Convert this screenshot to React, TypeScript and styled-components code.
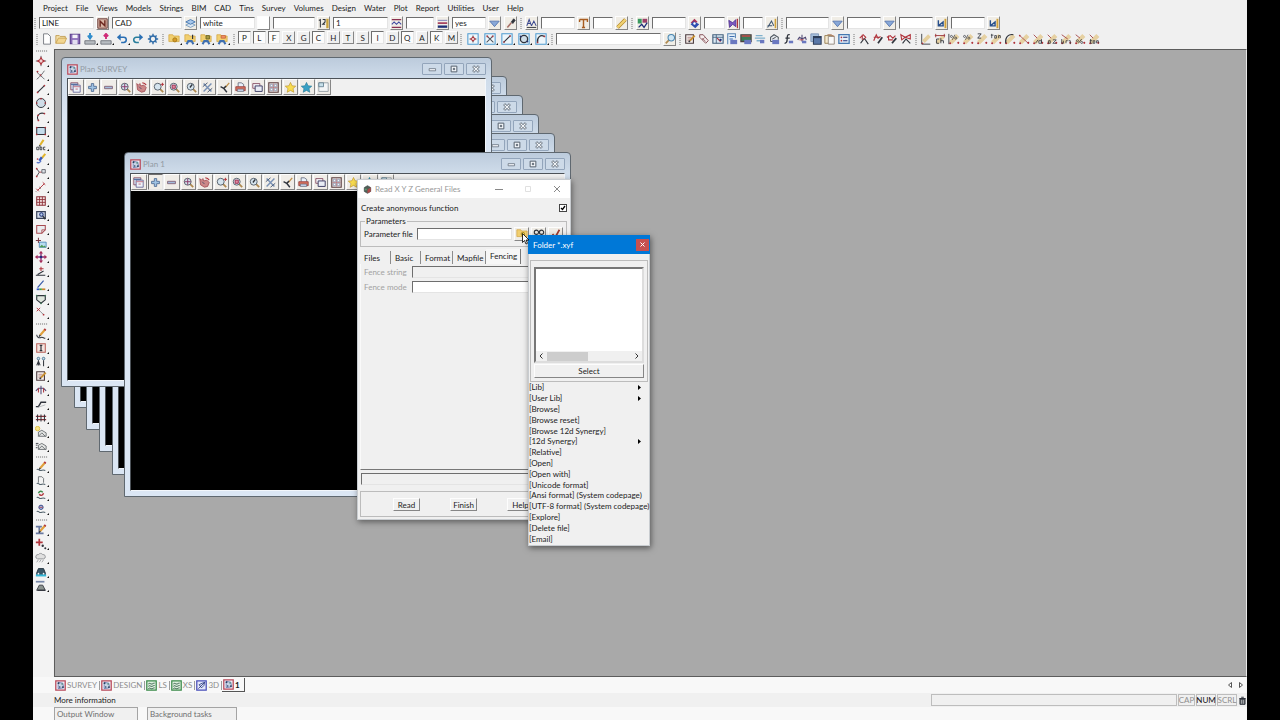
import React from "react";
import styled, { createGlobalStyle, css } from "styled-components";

const GlobalStyle = createGlobalStyle`
  *, *::before, *::after { box-sizing: border-box; }
  body { margin: 0; background: #000; overflow: hidden; }
  body, button, input { font-family: Lato, "Open Sans", sans-serif; font-size: 8px; line-height: 10px; color: #1c1c1c; }
  button, input { margin: 0; padding: 0; border-radius: 0; }
  svg { display: block; flex: none; }
`;

/* ---------- icon drawings, on a 14 unit grid ---------- */

type Stroke = [d: string, stroke?: string, fill?: string, width?: number];

const dot = (x: number, y: number, r: number) =>
  `M${x - r} ${y}a${r} ${r} 0 1 0 ${2 * r} 0a${r} ${r} 0 1 0 ${-2 * r} 0z`;
const box = (x: number, y: number, w: number, h: number) => `M${x} ${y}h${w}v${h}h${-w}z`;

const RED = "#b0343c";
const INK = "#30343c";
const BLUE = "#3f6fb0";
const NAVY = "#1e2f78";
const NONE = "none";

const lens: Stroke[] = [
  ["M8.5 8.5l4.500 4.500", "#b08a50", NONE, 2.2],
  [dot(6, 6, 4.400), "#4a5560", "#d5e4ee", 1.1],
];
const pencil: Stroke[] = [
  ["M11.500 2L6 8.500", "#e0a03c", NONE, 2.4],
  ["M12.300 1.200l-1.200 1.400", RED, NONE, 2.4],
  ["M6.200 8.200L4.800 10", INK, NONE, 1.6],
];
const folder: Stroke[] = [
  ["M1 2h4.500l1 1.500H13V10H1z", "#d0a23c", "#f1cf70", 0.8],
];
const wave: Stroke[] = [["M2 10c2-2 3 2 5 1s3-1 5 0", "#50606a", NONE, 1.2]];
const beige: Stroke[] = [
  ["M3 11.500L11.500 3", "#e6d1a2", NONE, 5],
  [dot(2.500, 12, 1.200), NONE, RED],
  [dot(12, 11.500, 1.200), NONE, RED],
];
const star = "M7 .500l2 4.300 4.700.500-3.500 3.100 1 4.700L7 10.700l-4.200 2.400 1-4.700L.300 5.300 5 4.800z";
const snapBox: Stroke = [box(1, 1, 12, 12), "#4e9bd0", "#eef6fb", 1.2];
const corners: Stroke = [box(5, 8, 8, 5), NONE, "#6a78c0"];

const drawings: Record<string, Stroke[]> = {
  plan: [
    [box(1, 1, 12, 12), "#b8485a", "#eef0f6", 1.600],
    ["M4 3l6 1 1 6-7 1z", "#6472ac", "#c9d5e6", 1],
    [dot(4.500, 4, 1.200) + dot(10, 9, 1.200) + dot(6, 9, 1), NONE, "#28415c"],
    [dot(9, 5, 1), NONE, "#3a8a6a"],
  ],
  section: [
    [box(1, 1, 12, 12), "#3d8b4b", "#dff0df", 1.600],
    ["M3 5c2-2 3 1 5 0s2-1 3-1M3 8c2-2 3 1 5 0s2-1 3-1M3 11c2-2 3 1 5 0s2-1 3-1", "#2c5840", NONE, 1.200],
  ],
  cube: [
    [box(1, 1, 12, 12), "#4a4fb8", "#e3e6fa", 1.600],
    ["M3 11L11 3M4 6l4-2 3-1-1 4-3 3M4 6l3 4", NAVY, NONE, 1],
  ],
  line: [["M3 11L11 3", INK, NONE, 1.300], [dot(3, 11, 1) + dot(11, 3, 1), NONE, RED]],
  point: [["M7 1v12M1 7h12", INK, NONE, 0.8], ["M7 3l1.400 2.600L11 7 8.400 8.400 7 11 5.600 8.400 3 7l2.600-1.400z", RED, "#f6dcdc", 1.200]],
  cross: [["M2 3c3 5 7 6 9 9M11 2C9 5 6 9 2 12", "#5b5f66", NONE, 1], [dot(3, 3, 1) + dot(6.500, 7, 1), NONE, RED]],
  circle: [[dot(7, 7, 5.300), INK, "#cfdde8", 1.100], [dot(2, 7, 1) + dot(12, 7, 1) + dot(7, 2, 1), NONE, RED]],
  arc: [["M11 3C5 1 1 6 4 11", INK, NONE, 1.200], [dot(11, 3, 1) + dot(3.500, 5, 1) + dot(4, 11, 1), NONE, RED]],
  rect: [[box(2, 3, 10, 8), INK, "#c4dcec", 1.200], [dot(2, 3, 1) + dot(12, 3, 1) + dot(2, 11, 1) + dot(12, 11, 1), NONE, RED]],
  label: [["M10 1L6 7", "#e0b42c", NONE, 2.400], ["M6 7l-1 1.500", INK, NONE, 1.400], ["M2 12.500v-3h2.500v3zM6 8.500v4h2v-3H6M12 9.500h-2v3h2", INK, NONE, 1]],
  brush: [["M12 1L8 6", "#e0b42c", NONE, 2.400], ["M8 5L5 9", "#3358c0", NONE, 2.800], ["M2 11c2 1 4 0 5-2", "#5a78c8", NONE, 1.600], [dot(3, 7, 1), NONE, RED]],
  feature: [["M2 2l3 4-3 5", INK, NONE, 1], ["M5 6h3", RED, NONE, 1], [box(8, 3, 4, 4), "#5b5f66", "#dde2e8", 1], [dot(2, 2, 1) + dot(2, 11, 1), NONE, RED]],
  measure: [["M3 11L11 3M1.500 9l3 3M9 1.500l3 3", RED, NONE, 1.100], ["M2 13l-1-1M5 7l2 2", "#7a5a5a", NONE, 1]],
  grid: [[box(2, 2, 10, 10), "#8c3038", "#f0dede", 1.200], ["M2 5.300h10M2 8.600h10M5.300 2v10M8.600 2v10", "#8c3038", NONE, 1]],
  view: [[box(2, 3, 10, 8), "#3a4258", "#d4deec", 1.400], [dot(7.500, 6.500, 2), NAVY, "#b9d0ec", 1.200], ["M9 8l3 4", INK, NONE, 1.600]],
  face: [["M2 3h10v5l-4 4H2z", "#a84a50", "#e9ecef", 1.200], ["M8 12V8h4", "#a84a50", NONE, 1]],
  image: [["M4 1v6M1 4h6", "#7a3a44", NONE, 1.200], [box(5, 6, 8, 6), "#4b86b8", "#b8dcf0", 1], ["M5 12l3-3 2 2 1-1 2 2z", NONE, "#4d9a50"]],
  move: [["M7 1v12M1 7h12", "#8a2c78", NONE, 1.600], ["M7 0l2.500 3h-5zM7 14l2.500-3h-5zM0 7l3-2.500v5zM14 7l-3-2.500v5z", NONE, "#a83058"], [dot(7, 7, 1.500), NONE, NAVY]],
  raise: [["M1 12h11M3 11L10 7", INK, NONE, 1.200], ["M7 2v5M5 4.500h5", RED, NONE, 1.200]],
  colour: [["M3 10L10 2", "#3558a8", NONE, 1.400], ["M2 12h3", "#3355c8", NONE, 2], ["M5 12h3", "#3aa046", NONE, 2], ["M8 12h4", "#c88430", NONE, 2]],
  polygon: [["M2 3h10v5l-5 4-5-4z", INK, "#dfe7dd", 1.300], [dot(2, 3, 1) + dot(12, 3, 1) + dot(7, 12, 1), NONE, "#417a58"]],
  erase: [["M2 1l4 4M6 1L2 5", RED, NONE, 1.100], ["M6 5l4 4", "#7a7f86", NONE, 1], [dot(10, 9, 1), NONE, RED]],
  sketch: [...pencil, ["M2 8c0 3 3 4 5 3s3 1 5 1", INK, NONE, 1.200]],
  beam: [[box(2, 2, 10, 10), "#b86058", "#f3e4df", 1.200], ["M7 4v6M5.500 4h3M5.500 10h3", INK, NONE, 1.400]],
  pins: [[dot(4, 3, 1.500) + dot(10, 3, 1.500), "#3d6c8c", "#cde0ea", 1], ["M4 5v6M10 5v7M2 11l2-5 2 5", INK, NONE, 1.200]],
  note: [[box(2, 2, 9, 10), "#4c3c40", "#f7f1ee", 1.300], ["M4 5h5M4 7h4M4 9h3", "#a06a6a", NONE, 0.8], ["M12.500 3L7 9", "#c89030", NONE, 2.200], ["M7 9l-1.500 1.500", INK, NONE, 1.600]],
  road: [["M1 8l3-3h6l3 3M7 2v10", "#4c4470", NONE, 1.200], ["M4 5v5M10 5v5", RED, NONE, 1.200]],
  slope: [["M1 10h3l3-5h6", INK, NONE, 1.600], ["M3 11l9-3", "#a0a4a8", NONE, 0.8]],
  rails: [["M1 5h12M1 9h12", "#8c3038", NONE, 1.400], ["M3 3v8M7 3v8M11 3v8", INK, NONE, 1.200]],
  sunsite: [[dot(3, 3, 2.600), "#e0bc38", "#f8e58a", 1], ["M4 12V7l4-2 5 3v4zM4 12l4-4 4 4", "#64686c", "#e3e5e4", 1]],
  site: [["M4 11V6l4-2 5 3v4zM4 11l4-4 4 4", "#64686c", "#e3e5e4", 1], ["M1 4h3M1 6h2M1 9h2", INK, NONE, 1]],
  curvepen: [...pencil, ...wave],
  curvedoc: [["M4 9V2h4l2 2v5", "#64686c", "#f3f3f3", 1], ...wave],
  curvesync: [["M4 5c1-3 4-3 5-1", "#3d8b4b", NONE, 1.600], ["M10 5c-1 3-4 3-5 1", RED, NONE, 1.600], ...wave],
  curveball: [[dot(7, 5, 2.500), NAVY, "#a9c6ea", 1], ["M5 5h4", RED, NONE, 1], ...wave],
  girder: [["M1 3h7M1 11h9M5 3v8", "#6878a0", NONE, 2], ...pencil],
  nodes: [["M5 1v8M1 5h8", RED, NONE, 2], [dot(9, 9, 1.400) + dot(12, 12, 1.200), NONE, INK]],
  cloud: [["M3 8a2.500 2.500 0 0 1 1-5 3 3 0 0 1 5 0 2.500 2.500 0 0 1 1 5z", "#8c8f92", "#e0e0e0", 1], ["M4 9l-2 3M7 9l-2 3M10 9l-2 3", "#9a9da0", NONE, 1]],
  car: [["M2 8l2-5h6l2 5v3H2z", "#1e2c38", "#3a5666", 1], ["M1 11h12", "#35b8d8", NONE, 2.400], [dot(4, 9, 1) + dot(10, 9, 1), NONE, "#f0f6f8"]],
  tunnel: [["M1 2h10", "#7888a8", NONE, 2], ["M2 12l3-6h4l3 6z", INK, "#8c9490", 1], ["M3 12h9", INK, NONE, 1.400]],

  file: [["M3 1h5l3 3v9H3z", "#6d7278", "#fff", 1]],
  open: [["M1 12V3h4l1 1h6v3", "#c09a50", "#f3dfa8", 1], ["M1 12l3-6h9.500L11 12z", "#c8a050", "#f2d690", 1]],
  save: [[box(1.500, 1.500, 11, 11), "#5b3f8c", "#8a6cb8", 1.300], [box(4, 2, 6, 4), NONE, "#f4f2f8"], [box(4, 8, 6, 5), NONE, "#e3dff0"]],
  download: [["M7 0v5M4.500 3L7 6.500 9.500 3", "#2f8ccc", NONE, 2.200], ["M1 9h12v4H1z", "#6d7278", "#b8bdc2", 1]],
  upload: [["M7 7V2M4.500 4L7 1l2.500 3", "#d02c78", NONE, 2.200], ["M1 9h12v4H1z", "#6d7278", "#b8bdc2", 1]],
  undo: [["M3 5h6a3 3 0 0 1 0 6H6", "#2a6fb4", NONE, 1.800], ["M5.500 1L1 5l4.500 4z", NONE, "#2a6fb4"]],
  redo: [["M11 5H5a3 3 0 0 0 0 6h3", "#2a7f9c", NONE, 1.800], ["M8.500 1L13 5 8.500 9z", NONE, "#2a6fb4"]],
  gear: [["M7 1v12M1 7h12M2.800 2.800l8.400 8.400M11.200 2.800l-8.400 8.400", "#2f6ca8", NONE, 1.600], [dot(7, 7, 3.400), "#2f6ca8", "#f0f0f0", 1.800]],
  folderbox: [...folder, [dot(8, 8, 2.400), "#a07818", "#d89a28", 1]],
  foldergear: [...folder, ["M3 13l2-3.500h4l2 3.500", BLUE, NONE, 2.400], ["M10 2v5", INK, NONE, 1.400]],
  foldergrid: [...folder, ["M3 13l2-3.500h4l2 3.500", BLUE, NONE, 2.400], [box(7, 3, 4, 4), "#6a6420", "#a89a40", 1]],
  folderred: [...folder, ["M3 13l2-3.500h4l2 3.500", BLUE, NONE, 2.400], [box(6, 3, 5, 3), "#c86838", "#f09068", 1]],
  snappoint: [snapBox, ["M7 3v8M3 7h8", INK, NONE, 1], ["M7 4.500l2.500 2.500L7 9.500 4.500 7z", RED, "#f3d6d6", 1.200]],
  snapcross: [snapBox, ["M3 3l8 8M11 3l-8 8", "#50545c", NONE, 1.200], [dot(4, 4, 1) + dot(10, 4, 1), NONE, RED]],
  snapline: [snapBox, ["M3 11L11 3", INK, NONE, 1.400], [dot(3.500, 10.500, 1) + dot(10.500, 3.500, 1), NONE, RED]],
  snapcircle: [snapBox, [dot(7, 7, 4.200), INK, "#cfdde8", 1.500], [dot(3, 4, 1) + dot(11, 10, 1), NONE, NAVY]],
  snaparc: [snapBox, ["M11 4C6 1 2 6 3 11", INK, NONE, 1.500], [dot(11, 4, 1) + dot(3, 11, 1), NONE, RED]],
  search: [["M6 8l-4 4", "#b08a50", NONE, 2], [dot(8.500, 5.500, 3.800), "#4a86b0", "#cfe6f4", 1.200]],

  tag: [["M2 2l4 0 6 7-3 3-7-7z", "#7a4048", "#f6eeee", 1], ["M5 6l4 4M8 5l-3 3", "#7a4048", NONE, 0.8]],
  table: [[box(1, 2, 12, 10), "#44607c", "#dbe9f4", 1.300], ["M1 5h12M5 2v10", "#44607c", NONE, 1], ["M6 6l4 4", RED, NONE, 1.400], [dot(10, 8, 1.400), NONE, NAVY]],
  layers2: [["M2 13V1h9v5", "#5c87b4", "#e4eff8", 1.200], ["M4 4h6M4 7h4", BLUE, NONE, 1.200], corners],
  board: [[box(1, 2, 12, 8), "#4c4040", "#3d7a58", 1.300], ["M2 3.500h10", "#c04848", NONE, 1.800], corners],
  stack: [["M2 3h8M1 6h12M3 9h6", "#7fb0cc", NONE, 1.600], [box(7, 8, 5, 4), NONE, "#6a78c0"]],
  shapes: [["M3 10V5l4-3 5 3v3M3 10h4", "#505860", "#e6eaee", 1.200], ["M5 7l4-2", INK, NONE, 1], corners],
  fx: [["M9 2C6 1 6 5 6 8s-1 4-3 4M4 6h5", INK, NONE, 1.500], [box(8, 9, 5, 3), NONE, "#6a78c0"]],
  balance: [["M2 8l2-3 3 2 4-2 1 3M7 2v8", "#4c4470", NONE, 1.200], ["M4 8h5", RED, NONE, 1], [box(7, 9, 5, 3), NONE, "#6a78c0"]],
  panel: [[box(1, 1, 9, 9), "#7890b4", "#a8c0dc", 1], [box(4, 4, 9, 9), "#2c3c58", "#5a78a8", 1.200], ["M4 5h9", "#2c3c58", NONE, 2]],
  clip: [[box(1, 3, 8, 9), "#927848", "#f4ead0", 1], [box(5, 4, 7, 9), "#8b7f75", "#f8f8f8", 1], ["M4 2h5M8 2l4 2", "#b08060", NONE, 1.200]],
  list: [[box(1, 2, 12, 10), "#4478b0", "#e6f0fa", 1.500], ["M6 5h5M6 9h5", NAVY, NONE, 1.200], [dot(4, 5, 1) + dot(4, 9, 1), NONE, RED]],
  comp1: [["M2 6l4-4 3 3-3 3M5 2v6", RED, NONE, 1.300], ["M3 12l3-4M6 7h2l4 6", INK, NONE, 1.300]],
  comp2: [["M2 9l3-7 2 4 3-2M2 5h7", RED, NONE, 1.300], ["M12 5l-5 7", INK, NONE, 2]],
  comp3: [["M1 5l4-2 3 3 3-3M3 3v5h5", RED, NONE, 1.300], ["M12 6l-5 6", INK, NONE, 2]],
  comp4: [["M1 2l5 3 6-3v5L6 5 2 8z", RED, NONE, 1.300], ["M3 12l4-5 5 5", INK, NONE, 1.300]],
  rulebase: [["M2 1v12h10", INK, NONE, 1], ["M4 10l7-7", "#e5cf9d", NONE, 4.400], [dot(3, 12, 1), NONE, RED]],
  rulech: [["M3 12L11 4", "#e6d1a2", NONE, 4.400], ["M1 3h12M2 1v4M12 1v4", "#a03c40", NONE, 1.100], ["M6 7H3v5h3M8 6v6M8 9h3v3", INK, NONE, 1]],
  rulepct: [...beige, ["M1 1v12", INK, NONE, 1], [dot(4, 4, 1.200) + dot(9, 6, 1.200), INK, NONE, 0.8], ["M8 2L5 8", INK, NONE, 0.8]],
  rulepct2: [...beige, [dot(3, 4, 1.200) + dot(8, 6, 1.200), INK, NONE, 0.8], ["M7 2L4 8", INK, NONE, 0.8]],
  rulez: [...beige, ["M2 1h4L2 6h4", INK, NONE, 1]],
  ruletan: [...beige, ["M2 1v5M1 2.500h3M5.500 3h2v3h-2zM10 6V3h2v3", INK, NONE, 0.9]],
  rulearc: [...beige, ["M2 12C1 5 5 1 11 2", INK, NONE, 1.200]],
  rulecross: [...beige, ["M2 3l10 9", "#a03c40", NONE, 0.9], [dot(2, 3, 1), NONE, RED]],
  rulexd: [...beige, ["M2 2l4 4", "#a03c40", NONE, 1], ["M4 12l3-4M8 9h3v3H8zM11 7v5", INK, NONE, 0.9]],
  ruledz: [...beige, ["M2 2l4 4", "#a03c40", NONE, 1], ["M3 9h2v3H3zM8 8h4l-4 4h4", INK, NONE, 0.9]],
  rulebrg: [...beige, ["M2 7v5h2V9M7 12V9h2M10 9h2v4", INK, NONE, 0.9], ["M2 2l7 5", "#a03c40", NONE, 1]],
  rulepct3: [...beige, ["M2 2l5 4", "#a03c40", NONE, 1], ["M9 7l-4 5", INK, NONE, 0.9], [dot(4, 9, 1.200) + dot(9, 11, 1.200), INK, NONE, 0.8]],
  ruletan2: [...beige, ["M2 2l4 4", "#a03c40", NONE, 1], ["M3 7v5h2M2 9h3M6 9h2v3H6zM10 12V9h2v3", INK, NONE, 0.9]],

  windows: [[box(1, 1, 9, 9), "#7c3c54", "#dbe6f2", 1], ["M1 3h9", "#5878a8", NONE, 1.600], [box(4, 4, 9, 9), "#5b5a90", "#eef3f9", 1], ["M4 6h9M7 9h3", "#c07080", NONE, 1.200]],
  plus: [["M5.500 2h3v3.500H12v3H8.500V12h-3V8.500H2v-3h3.500z", "#46628c", "#9fc3e4", 1]],
  minus: [["M2 5.500h10v3H2z", "#7a5468", "#a4bcdc", 1]],
  zoomfit: [...lens, ["M6 2v8M2 6h8", "#8a3868", NONE, 1.200]],
  pan: [["M1 2l2 2 2-2 1 3 4-1 3 3-2 5-4 1-5-3z", "#a04850", "#cc8888", 1], ["M8 1l3 1 2 2", RED, NONE, 1.400], ["M4 6l3 3", "#54506c", NONE, 1.200]],
  zoominout: [...lens, ["M10 3h4M12 1v4", RED, NONE, 1.200]],
  zoomwin: [...lens, [box(4, 4, 4, 4), "#a02c50", "#e090a0", 1.200]],
  zoomprev: [...lens, ["M8 3L5 7", INK, NONE, 1.800]],
  redraw: [["M2 2l10 10M12 2L2 12", "#7890b4", NONE, 1.800], ["M1 6l6-5M7 13l6-5", "#4a5a74", NONE, 1.200]],
  sweep: [["M13 1L8 7", "#c09048", NONE, 1.600], ["M9 5L6 8 2 6M6 8l4 5", INK, NONE, 1.800]],
  printer: [["M4 6V1h4l3 2v3", "#5a6070", "#e8f0fa", 1], ["M1 6h12v5H1z", "#903838", "#d8705c", 1], [box(3, 9, 8, 3), "#5a6070", "#c8d4ec", 0.8]],
  copies: [[box(1, 2, 9, 6), "#7c3c54", "#f3f3f6", 1], [box(4, 5, 9, 7), "#3c3c64", "#e9edf5", 1.200]],
  matrix: [[box(1, 1, 12, 12), "#5c4040", "#e7dfe0", 1.400], [box(3, 3, 3, 3) + box(8, 3, 3, 3) + box(3, 8, 3, 3) + box(8, 8, 3, 3), "#8090a8", "#f6f6f8", 0.900], ["M7 2v10M2 7h10", "#b07078", NONE, 0.800]],
  gold: [[star, "#b8902c", "#f8dc50", 0.8]],
  teal: [[star, "#287894", "#38a0c4", 0.8]],
  layout: [[box(1, 1, 12, 11), "#8a949c", "#f3f5f6", 1], [box(1, 1, 6, 5), "#5a7888", "#c8e0ea", 1]],

  hatchN: [[box(1, 1, 12, 12), "#6a3c38", "#d8b4a4", 1.200], ["M4 11V4l6 6V3", "#6c2820", NONE, 1.800]],
  layer: [["M1 9l6-3 6 3-6 3z", "#6890b8", "#dce8f4", 1], ["M1 5l6-3 6 3-6 3z", "#4878b0", "#a8c8ec", 1.200]],
  scale: [["M1 3l2-1v10M6 2h3v3L6 8h3", INK, NONE, 1.300], ["M12 1v12", "#c8a038", NONE, 3]],
  linestyle: [["M1 2h12M1 12h12", "#8a3050", NONE, 1.600], ["M1 8l3-3 3 3 3-3 3 3", "#4048a0", NONE, 1.400]],
  weight: [["M1 3h12", "#7c7cb8", NONE, 1.200], ["M1 6.500h12", "#a03050", NONE, 2], ["M1 11h12", NAVY, NONE, 3]],
  down: [["M1 4h12L7 11z", "#4c6ca8", "#88a8d8", 1]],
  picker: [["M11 1L8 5l2 2 3-4z", INK, INK, 1], ["M8 6l-5 6", "#a87068", NONE, 2]],
  textstyle: [["M1 10l3-8 3 8M2 7h4M7 10l3-6 3 6", "#3a4890", NONE, 1.300], ["M1 12h12", INK, NONE, 1.200]],
  bigT: [["M2 2h10v3M2 2v3M7 2v10M5 12h4", "#a85c20", NONE, 1.800]],
  ruler: [["M2 12L12 2", "#ac8020", NONE, 4.600], ["M2 12L12 2", "#f0d070", NONE, 3]],
  palette: [[box(1, 1, 5, 6), NONE, "#3a9a60"], [box(7, 1, 6, 5), NONE, "#9a4068"], ["M2 12l4-4 3 4 4-6", NAVY, NONE, 1.600]],
  swap: [["M2 6l5-5 4 4-4 2z", NONE, "#a83058"], ["M2 8l4-4 7 4-5 5z", NONE, "#2c4cb0"], [dot(7, 7, 1.500), NONE, "#fff"]],
  swap2: [["M1 3l5 3 4-4v9l-4-3-4 4z", "#4a2c90", "#7c58c0", 1], ["M12 1v12", RED, NONE, 1.600]],
  angle: [["M2 12l5-8 3 6M2 10h6", "#3c5470", NONE, 1.300], ["M12 1v12", "#d0a038", NONE, 2]],
  angle2: [["M3 3v7h7M3 10l6-5v5", "#28508c", NONE, 1.800], ["M12 1v12", "#d0a038", NONE, 2.400]],
  link: [[dot(4, 5, 2.500) + dot(10, 5, 2.500), INK, NONE, 1.300]],
  tick: [["M3 7l3 4 5-9", "#a03c30", NONE, 2]],
  pick: [...folder, [dot(8, 7, 2), "#a08018", "#f8e060", 1]],
  app: [["M2 4l5-3 5 3v6l-5 3-5-3z", "#3c4444", "#506058", 1], ["M7 7l5-3v6l-5 3z", NONE, "#b04848"], [dot(4.500, 7, 1.500), NONE, "#58a070"]],
  trash: [["M2 4h10M5 2h4", INK, NONE, 1.800], ["M3 5h8v8H3z", INK, "#60646a", 1.400], ["M5.500 6v6M8.500 6v6", "#e8e8e8", NONE, 0.8]],
  min: [["M3 6.500h9v3H3z", "#66717e", "#f4f7fa", 1.100]],
  max: [[box(3, 3, 8, 8), "#56616e", "#f4f7fa", 1.400], [box(6, 6, 2, 2), "#56616e", "#56616e", 1]],
  close: [["M3 3l8 8M11 3l-8 8", "#56616e", NONE, 3.800], ["M3.500 3.500l7 7M10.500 3.500l-7 7", "#f4f7fa", NONE, 1.600]],
};

const Drawing = ({ name, size = 12 }: { name: string; size?: number }) => (
  <svg width={size} height={size} viewBox="0 0 14 14" aria-hidden="true">
    {drawings[name].map(([d, stroke = NONE, fill = NONE, width = 1], i) => (
      <path key={i} d={d} stroke={stroke} fill={fill} strokeWidth={width} />
    ))}
  </svg>
);

/* ---------- shared looks ---------- */

const sunken = css`
  border: 1px solid;
  border-color: #6e6e6e #e4e4e4 #e4e4e4 #6e6e6e;
`;
const raised = css`
  border: 1px solid;
  border-color: #fdfdfd #868686 #868686 #fdfdfd;
`;

/* ---------- shell ---------- */

const Screen = styled.div`
  height: 100vh;
  padding: 0 33px;
  background: #000;
`;
const Shell = styled.div`
  height: 100%;
  display: flex;
  flex-direction: column;
  overflow: hidden;
  background: #f0f0f0;
`;
const MenuBar = styled.nav`
  display: flex;
  height: 15px;
  padding-left: 6px;
  flex: none;
`;
const MenuButton = styled.button`
  border: 0;
  background: none;
  padding: 0 4px;
  white-space: nowrap;
`;
const ToolRow = styled.div<{ $gap: number }>`
  display: flex;
  flex: none;
  align-items: center;
  height: 16px;
  gap: ${(p) => p.$gap}px;
  padding-left: 1px;
`;
const Grip = styled.span<{ $flat?: boolean; $side?: number }>`
  flex: none;
  width: ${(p) => (p.$flat ? 12 : 2)}px;
  height: ${(p) => (p.$flat ? 2 : 11)}px;
  margin: ${(p) => (p.$flat ? "3px 0 2px 3px" : `0 ${p.$side ?? 0}px`)};
  background: repeating-linear-gradient(${(p) => (p.$flat ? "90deg" : "180deg")}, #b4b4b4 0 1px, #ececec 1px 2px);
`;
const Pair = styled.span<{ $side?: number }>`
  display: flex;
  align-items: center;
  gap: 2px;
  padding: 0 ${(p) => p.$side ?? 0}px;
`;
const TextBox = styled.input<{ $w?: number }>`
  ${sunken}
  width: ${(p) => (p.$w ? `${p.$w}px` : "auto")};
  flex: ${(p) => (p.$w ? "none" : "1")};
  min-width: 0;
  height: 12px;
  padding: 0 2px;
  background: #fff;
  &:disabled { background: #f0f0f0; }
`;
const ToolButton = styled.button<{ $white?: boolean; $w?: number }>`
  ${raised}
  display: flex;
  align-items: center;
  justify-content: center;
  flex: none;
  width: ${(p) => p.$w ?? 13}px;
  height: 14px;
  background: ${(p) => (p.$white ? "#fff" : "#f0ede6")};
`;
const IconCell = styled.button<{ $w?: number; $corner?: boolean }>`
  position: relative;
  display: flex;
  align-items: center;
  justify-content: center;
  flex: none;
  width: ${(p) => p.$w ?? 14}px;
  height: 14px;
  border: 0;
  background: none;
  &::after {
    content: ${(p) => (p.$corner ? '""' : "none")};
    position: absolute;
    right: 0;
    bottom: 1px;
    border: 1px solid #111;
    border-color: transparent #111 #111 transparent;
  }
`;
const LetterStrip = styled.div`
  display: flex;
  flex: none;
  width: 220px;
  height: 16px;
  gap: 2px;
`;
const LetterButton = styled.button<{ $on: boolean }>`
  ${(p) => (p.$on ? sunken : raised)}
  flex: 1;
  height: 13px;
  background: ${(p) => (p.$on ? "#fbfbfb" : "#efefef")};
`;

const Middle = styled.div`
  display: flex;
  flex: 1;
  min-height: 0;
`;
const SideBar = styled.div`
  display: flex;
  flex-direction: column;
  flex: none;
  width: 20px;
  background: #f3f3f3;
`;
const Desktop = styled.main`
  position: relative;
  flex: 1;
  margin: 2px 0 0 1px;
  border: 1px solid #5c5c5c;
  border-right-color: #e8e8e8;
  background: #a9a9a9;
  overflow: hidden;
`;

/* ---------- document windows ---------- */

const Frame = styled.section<{ $x: number; $y: number; $w: number; $h: number }>`
  position: absolute;
  left: ${(p) => p.$x}px;
  top: ${(p) => p.$y}px;
  width: ${(p) => p.$w}px;
  height: ${(p) => p.$h}px;
  display: flex;
  flex-direction: column;
  padding: 0 5px 5px;
  border: 1px solid #5f6870;
  border-radius: 4px 4px 0 0;
  background: linear-gradient(#bccbdc, #cfdcea 20px, #dbe6f4 60px);
`;
const FrameTitle = styled.header`
  display: flex;
  align-items: center;
  flex: none;
  height: 20px;
  padding-top: 2px;
  gap: 2px;
  color: #929aa3;
  h2 { flex: 1; margin: 0; font: inherit; }
`;
const FrameButton = styled.button`
  display: flex;
  align-items: center;
  justify-content: center;
  width: 20px;
  height: 12px;
  border: 1px solid #93a5bb;
  border-radius: 1px;
  background: #cddae8;
`;
const FrameBody = styled.div`
  display: flex;
  flex-direction: column;
  flex: 1;
  border: 1px solid #4c5258;
  border-right-color: #f2f6fb;
  border-bottom-color: #f2f6fb;
  background: #000;
`;
const FrameTools = styled.div`
  flex: none;
  height: 17px;
  background: #f0f0f0;
`;
const FrameStrip = styled.div`
  display: flex;
  width: 263px;
  gap: 1px;
`;
const FrameTool = styled.button<{ $on?: boolean }>`
  ${(p) => (p.$on ? sunken : raised)}
  flex: 1;
  display: flex;
  align-items: center;
  justify-content: center;
  height: 16px;
  background: #f0ede8;
`;

/* ---------- dialog ---------- */

const Dialog = styled.section`
  position: absolute;
  left: 302px;
  top: 129px;
  width: 214px;
  height: 341px;
  display: flex;
  flex-direction: column;
  background: #f0f0f0;
  border: 1px solid #c8ccd0;
  box-shadow: 1px 2px 6px rgba(0, 0, 0, 0.45);
`;
const DialogTitle = styled.header`
  display: flex;
  align-items: center;
  flex: none;
  height: 18px;
  padding-left: 5px;
  gap: 3px;
  background: #fff;
  color: #999;
  h2 { flex: 1; margin: 0; font: inherit; }
`;
const CaptionButton = styled.button<{ $dim?: boolean }>`
  display: flex;
  justify-content: center;
  width: 26px;
  border: 0;
  background: none;
  opacity: ${(p) => (p.$dim ? 0.25 : 1)};
`;
const DialogBody = styled.div`
  display: flex;
  flex-direction: column;
  flex: 1;
  padding: 5px 3px 2px 2px;
`;
const CheckLine = styled.label`
  display: flex;
  justify-content: space-between;
  align-items: center;
  height: 10px;
  padding-left: 1px;
`;
const Tick = styled.input`
  appearance: none;
  width: 8px;
  height: 8px;
  border: 1px solid #444;
  background: #fff;
  &:checked {
    background: #fff url("data:image/svg+xml,%3Csvg xmlns='http://www.w3.org/2000/svg' viewBox='0 0 6 6'%3E%3Cpath d='M1 3l1.500 1.500L5 1' fill='none' stroke='%23000' stroke-width='1.300'/%3E%3C/svg%3E");
  }
`;
const Group = styled.fieldset`
  flex: none;
  min-width: 0;
  height: 31px;
  margin: 3px 0 0;
  padding: 0 3px;
  border: 1px solid #bcbcbc;
  legend { padding: 0 1px; margin-left: 1px; height: 10px; }
`;
const FieldLine = styled.div<{ $label: number }>`
  display: flex;
  align-items: center;
  gap: 2px;
  height: 15px;
  label { flex: none; width: ${(p) => p.$label}px; white-space: nowrap; }
`;
const TabStrip = styled.div`
  display: flex;
  align-items: flex-end;
  flex: none;
  height: 17px;
`;
const TabButton = styled.button<{ $w: number; $on?: boolean }>`
  width: ${(p) => p.$w}px;
  height: ${(p) => (p.$on ? 15 : 13)}px;
  padding: 0 0 ${(p) => (p.$on ? 2 : 0)}px 4px;
  text-align: left;
  border: 0;
  border-right: 1px solid ${(p) => (p.$on ? "#777" : "#8c8c8c")};
  background: ${(p) => (p.$on ? "#f6f6f6" : "none")};
`;
const TabPanel = styled.div`
  flex: 1;
  padding: 0 0 0 3px;
  border-left: 1px solid #fafafa;
  border-bottom: 1px solid #777;
  color: #a2a2a2;
`;
const Output = styled.output`
  ${sunken}
  flex: none;
  height: 12px;
  margin: 3px 0 6px 1px;
`;
const Actions = styled.div`
  display: flex;
  align-items: center;
  flex: none;
  height: 26px;
  padding: 1px 0 0 32px;
  gap: 30px;
  border: 1px solid #bcbcbc;
`;
const PushButton = styled.button`
  ${raised}
  width: 27px;
  height: 13px;
  background: #f0f0f0;
`;

/* ---------- file popup ---------- */

const Popup = styled.section`
  position: absolute;
  left: 473px;
  top: 185px;
  width: 122px;
  height: 311px;
  display: flex;
  flex-direction: column;
  background: #f0f0f0;
  border: 1px solid #c8ccd0;
  border-top: 0;
  box-shadow: 1px 2px 6px rgba(0, 0, 0, 0.5);
`;
const PopupTitle = styled.header`
  display: flex;
  align-items: center;
  justify-content: space-between;
  flex: none;
  height: 19px;
  margin: 0 -1px;
  padding: 0 1px 0 5px;
  background: #0078d7;
  color: #fff;
  h2 { margin: 0; font: inherit; }
`;
const PopupClose = styled.button`
  display: flex;
  align-items: center;
  justify-content: center;
  width: 13px;
  height: 12px;
  border: 0;
  background: #c75050;
`;
const PopupBox = styled.div`
  display: flex;
  flex-direction: column;
  flex: none;
  height: 122px;
  margin: 6px 1px 0;
  padding: 6px 3px 3px;
  border: 1px solid #bcbcbc;
  gap: 1px;
`;
const FileList = styled.div`
  display: flex;
  flex-direction: column;
  justify-content: flex-end;
  flex: 1;
  border: 2px solid;
  border-color: #777 #ddd #ddd #777;
  background: #fff;
`;
const ScrollBar = styled.div`
  display: flex;
  align-items: center;
  height: 10px;
  padding: 0 2px;
  background: #f0f0f0;
`;
const ScrollTrack = styled.div`
  flex: 1;
  height: 9px;
  padding: 0 3px;
  &::before { content: ""; display: block; width: 41px; height: 9px; background: #cdcdcd; }
`;
const SelectButton = styled.button`
  ${raised}
  height: 14px;
  background: #f0f0f0;
`;
const Choices = styled.div`
  display: flex;
  flex-direction: column;
  flex: 1;
  padding-bottom: 1px;
`;
const Choice = styled.button`
  display: flex;
  align-items: center;
  justify-content: space-between;
  flex: 1;
  min-height: 0;
  padding: 0 8px 0 0;
  border: 0;
  background: none;
  white-space: nowrap;
`;
const Pointer = styled.svg`
  position: absolute;
  left: 467px;
  top: 183px;
`;

/* ---------- footer ---------- */

const ViewTabs = styled.div`
  display: flex;
  align-items: center;
  flex: none;
  height: 16px;
  padding: 0 1px 0 21px;
  background: #f8f8f8;
`;
const ViewTab = styled.button<{ $on?: boolean }>`
  display: flex;
  align-items: center;
  gap: 1px;
  height: 14px;
  padding: 0 2px 0 1px;
  border: 0;
  background: none;
  color: #8d8d8d;
  ${(p) =>
    p.$on &&
    css`
      padding-right: 4px;
      border-right: 1px solid #555;
      border-bottom: 1px solid #555;
      color: #111;
      font-weight: 700;
    `}
`;
const Bar = styled.span`
  width: 1px;
  height: 9px;
  background: #9c9c9c;
`;
const Spacer = styled.span`
  flex: 1;
`;
const Arrow = styled.button`
  display: flex;
  justify-content: center;
  width: 11px;
  border: 0;
  background: none;
`;
const StatusBar = styled.footer`
  display: flex;
  align-items: center;
  flex: none;
  height: 14px;
  gap: 1px;
  padding-left: 21px;
  span:first-child { flex: 1; }
`;
const StatusCell = styled.span<{ $w: number; $on?: boolean }>`
  display: flex;
  align-items: center;
  justify-content: center;
  width: ${(p) => p.$w}px;
  height: 12px;
  border: 1px solid #bdbdbd;
  color: ${(p) => (p.$on ? "#111" : "#8f8f8f")};
`;
const Docked = styled.div`
  display: flex;
  flex: none;
  height: 13px;
  gap: 9px;
  padding-left: 21px;
  background: #f8f8f8;
`;
const DockTab = styled.button<{ $w: number }>`
  width: ${(p) => p.$w}px;
  padding-left: 2px;
  text-align: left;
  border: 1px solid #a4a4a4;
  border-bottom: 0;
  background: #f0f0f0;
  color: #6f6f6f;
`;

/* ---------- data ---------- */

const menus = ["Project", "File", "Views", "Models", "Strings", "BIM", "CAD", "Tins", "Survey", "Volumes", "Design", "Water", "Plot", "Report", "Utilities", "User", "Help"];

type Field = { w?: number; value?: string; icon?: string; name?: string };
const fieldGroups: Field[][] = [
  [
    { w: 55, value: "LINE", icon: "hatchN", name: "Name" },
    { w: 70, value: "CAD", icon: "layer", name: "Model" },
    { w: 55, value: "white", icon: "", name: "Colour" },
    { w: 42, icon: "scale", name: "Height" },
    { w: 55, value: "1", icon: "linestyle", name: "Linestyle" },
    { w: 28, icon: "weight", name: "Weight" },
    { w: 34, value: "yes", icon: "down", name: "Tinable" },
    { icon: "picker", name: "Pick" },
  ],
  [
    { icon: "textstyle", name: "Text style" },
    { w: 34, icon: "bigT", name: "Text" },
    { w: 20, icon: "ruler", name: "Size" },
  ],
  [
    { icon: "palette", name: "Palette" },
    { w: 34, icon: "swap", name: "Symbol" },
    { w: 21, icon: "swap2", name: "Symbol size" },
    { w: 20, icon: "angle", name: "Symbol angle" },
  ],
  [
    { w: 43, icon: "down", name: "Style" },
    { w: 34, icon: "down", name: "Justify" },
    { w: 34, icon: "angle2", name: "Angle" },
    { w: 34, icon: "angle2", name: "Slant" },
  ],
];

const letters = "PLFXGCHTSIDQAKM".split("");
const lettersOn = "PLFCIQK";
const snaps = ["snappoint", "snapcross", "snapline", "snapcircle", "snaparc"];
const edits = ["note", "tag", "table", "layers2", "board", "stack", "shapes", "fx", "balance", "panel", "clip", "list"];
const comps = ["comp1", "comp2", "comp3", "comp4"];
const rules = ["rulebase", "rulech", "rulepct", "rulepct2", "rulez", "ruletan", "rulearc", "rulecross", "rulexd", "ruledz", "rulebrg", "rulepct3", "ruletan2"];
const sideGroups = [
  ["point", "cross", "line", "circle", "arc", "rect", "label", "brush", "feature", "measure", "grid", "view", "face", "image", "move", "raise", "colour", "polygon", "erase"],
  ["sketch", "beam", "pins", "note", "road", "slope", "rails", "sunsite", "site"],
  ["curvepen", "curvedoc", "curvesync", "curveball"],
  ["girder", "nodes", "cloud", "car", "tunnel"],
];
const planTools = ["windows", "plus", "minus", "zoomfit", "pan", "zoominout", "zoomwin", "zoomprev", "redraw", "sweep", "printer", "copies", "matrix", "gold", "teal", "layout"];
const views = [
  ["plan", "SURVEY"],
  ["plan", "DESIGN"],
  ["section", "LS"],
  ["section", "XS"],
  ["cube", "3D"],
];
const choices = ["[Lib]", "[User Lib]", "[Browse]", "[Browse reset]", "[Browse 12d Synergy]", "[12d Synergy]", "[Relative]", "[Open]", "[Open with]", "[Unicode format]", "[Ansi format] (System codepage)", "[UTF-8 format] (System codepage)", "[Explore]", "[Delete file]", "[Email]"];
const nested = ["[Lib]", "[User Lib]", "[12d Synergy]"];

/* ---------- parts ---------- */

const Cells = ({ names, corner, w }: { names: string[]; corner?: boolean; w?: number }) => (
  <>
    {names.map((n, i) => (
      <IconCell key={i} $w={w} $corner={corner} aria-label={n}>
        <Drawing name={n} />
      </IconCell>
    ))}
  </>
);

type PlanProps = { x: number; y: number; w: number; h: number; title?: string; pressed?: string };
const PlanWindow = ({ x, y, w, h, title, pressed }: PlanProps) => (
  <Frame $x={x} $y={y} $w={w} $h={h}>
    <FrameTitle>
      {title && <Drawing name="plan" size={11} />}
      <h2>{title}</h2>
      {["min", "max", "close"].map((n) => (
        <FrameButton key={n} aria-label={n}>
          <Drawing name={n} size={10} />
        </FrameButton>
      ))}
    </FrameTitle>
    <FrameBody>
      {title && (
        <FrameTools>
          <FrameStrip>
            {planTools.map((n) => (
              <FrameTool key={n} $on={n === pressed} aria-label={n}>
                <Drawing name={n} size={11} />
              </FrameTool>
            ))}
          </FrameStrip>
        </FrameTools>
      )}
    </FrameBody>
  </Frame>
);

const ReadDialog = () => (
  <Dialog>
    <DialogTitle>
      <Drawing name="app" size={9} />
      <h2>Read X Y Z General Files</h2>
      <CaptionButton aria-label="Minimise">
        <svg width="8" height="8" viewBox="0 0 8 8"><path d="M0 4.500h8" stroke="#888" /></svg>
      </CaptionButton>
      <CaptionButton aria-label="Maximise" $dim>
        <svg width="8" height="8" viewBox="0 0 8 8"><path d="M1.500 1.500h5v5h-5z" stroke="#888" fill="none" /></svg>
      </CaptionButton>
      <CaptionButton aria-label="Close">
        <svg width="8" height="8" viewBox="0 0 8 8"><path d="M1 1l6 6M7 1L1 7" stroke="#888" /></svg>
      </CaptionButton>
    </DialogTitle>
    <DialogBody>
      <CheckLine>
        Create anonymous function
        <Tick type="checkbox" defaultChecked />
      </CheckLine>
      <Group>
        <legend>Parameters</legend>
        <FieldLine $label={51}>
          <label htmlFor="parameter-file">Parameter file</label>
          <TextBox id="parameter-file" />
          {["pick", "link", "tick"].map((n) => (
            <ToolButton key={n} $w={15} aria-label={n}>
              <Drawing name={n} />
            </ToolButton>
          ))}
        </FieldLine>
      </Group>
      <TabStrip>
        <TabButton $w={31}>Files</TabButton>
        <TabButton $w={30}>Basic</TabButton>
        <TabButton $w={32}>Format</TabButton>
        <TabButton $w={33}>Mapfile</TabButton>
        <TabButton $w={35} $on>Fencing</TabButton>
      </TabStrip>
      <TabPanel>
        <FieldLine $label={46}>
          <label htmlFor="fence-string">Fence string</label>
          <TextBox id="fence-string" disabled />
        </FieldLine>
        <FieldLine $label={46}>
          <label htmlFor="fence-mode">Fence mode</label>
          <TextBox id="fence-mode" />
        </FieldLine>
      </TabPanel>
      <Output />
      <Actions>
        <PushButton>Read</PushButton>
        <PushButton>Finish</PushButton>
        <PushButton>Help</PushButton>
      </Actions>
    </DialogBody>
  </Dialog>
);

const FolderPopup = () => (
  <Popup>
    <PopupTitle>
      <h2>Folder *.xyf</h2>
      <PopupClose aria-label="Close">
        <svg width="5" height="5" viewBox="0 0 5 5"><path d="M.500.500l4 4M4.500.500l-4 4" stroke="#fff" /></svg>
      </PopupClose>
    </PopupTitle>
    <PopupBox>
      <FileList>
        <ScrollBar>
          <svg width="6" height="6" viewBox="0 0 6 6"><path d="M4.500 0.500L2 3l2.500 2.500" stroke="#333" fill="none" /></svg>
          <ScrollTrack />
          <svg width="6" height="6" viewBox="0 0 6 6"><path d="M1.500 0.500L4 3 1.500 5.500" stroke="#333" fill="none" /></svg>
        </ScrollBar>
      </FileList>
      <SelectButton>Select</SelectButton>
    </PopupBox>
    <Choices>
      {choices.map((c) => (
        <Choice key={c}>
          {c}
          {nested.includes(c) && (
            <svg width="3" height="5" viewBox="0 0 3 5"><path d="M0 0l3 2.500L0 5z" /></svg>
          )}
        </Choice>
      ))}
    </Choices>
  </Popup>
);

export default function App() {
  return (
    <Screen>
      <GlobalStyle />
      <Shell>
        <MenuBar>
          {menus.map((m) => (
            <MenuButton key={m}>{m}</MenuButton>
          ))}
        </MenuBar>
        <ToolRow $gap={3}>
          {fieldGroups.map((group, g) => (
            <React.Fragment key={g}>
              <Grip />
              {group.map((f) => (
                <Pair key={f.name}>
                  {f.w && <TextBox $w={f.w} defaultValue={f.value} aria-label={f.name} />}
                  {f.icon !== undefined && (
                    <ToolButton $white={f.icon === ""} aria-label={`${f.name} list`}>
                      {f.icon && <Drawing name={f.icon} size={11} />}
                    </ToolButton>
                  )}
                </Pair>
              ))}
            </React.Fragment>
          ))}
        </ToolRow>
        <ToolRow $gap={0}>
          <Grip $side={2} />
          <Cells names={["file", "open", "save"]} />
          <Cells names={["download", "upload", "undo"]} w={16} corner />
          <Cells names={["redo", "gear"]} w={15} />
          <Grip $side={2} />
          <Cells names={["folderbox", "foldergear", "foldergrid", "folderred"]} w={16} corner />
          <Grip $side={3} />
          <LetterStrip>
            {letters.map((l) => (
              <LetterButton key={l} $on={lettersOn.includes(l)}>{l}</LetterButton>
            ))}
          </LetterStrip>
          <Grip $side={2} />
          <Cells names={snaps} w={17} corner />
          <Grip $side={2} />
          <Pair $side={1}>
            <TextBox $w={105} aria-label="Search" />
            <ToolButton aria-label="Find">
              <Drawing name="search" />
            </ToolButton>
          </Pair>
          <Grip $side={2} />
          <Cells names={edits} />
          <Grip $side={2} />
          <Cells names={comps} />
          <Grip $side={2} />
          <Cells names={rules} />
        </ToolRow>
        <Middle>
          <SideBar>
            {sideGroups.map((group, g) => (
              <React.Fragment key={g}>
                <Grip $flat />
                <Cells names={group} w={16} corner />
              </React.Fragment>
            ))}
          </SideBar>
          <Desktop>
            <PlanWindow x={19} y={26} w={433} h={332} />
            <PlanWindow x={31} y={45} w={437} h={335} />
            <PlanWindow x={44} y={64} w={440} h={338} />
            <PlanWindow x={57} y={83} w={443} h={342} />
            <PlanWindow x={6} y={7} w={431} h={330} title="Plan SURVEY" />
            <PlanWindow x={69} y={102} w={447} h={345} title="Plan 1" pressed="plus" />
            <ReadDialog />
            <FolderPopup />
            <Pointer width="8" height="12" viewBox="0 0 8 12" aria-hidden="true">
              <path d="M.500.500v9l2-2 1.500 3.500 1.500-.700L4 7h3z" fill="#fff" stroke="#000" strokeWidth="0.800" />
            </Pointer>
          </Desktop>
        </Middle>
        <ViewTabs>
          {views.map(([icon, label]) => (
            <React.Fragment key={label}>
              <ViewTab>
                <Drawing name={icon} size={11} />
                {label}
              </ViewTab>
              <Bar />
            </React.Fragment>
          ))}
          <ViewTab $on>
            <Drawing name="plan" size={11} />1
          </ViewTab>
          <Spacer />
          <Arrow aria-label="Previous view">
            <svg width="4" height="6" viewBox="0 0 4 6"><path d="M3.500.500v5L.500 3z" fill="#fff" stroke="#555" /></svg>
          </Arrow>
          <Arrow aria-label="Next view">
            <svg width="4" height="6" viewBox="0 0 4 6"><path d="M.500.500v5L3.500 3z" fill="#fff" stroke="#555" /></svg>
          </Arrow>
        </ViewTabs>
        <StatusBar>
          <span>More information</span>
          <StatusCell $w={246} />
          <StatusCell $w={17}>CAP</StatusCell>
          <StatusCell $w={20} $on>NUM</StatusCell>
          <StatusCell $w={20}>SCRL</StatusCell>
          <Drawing name="trash" size={9} />
        </StatusBar>
        <Docked>
          <DockTab $w={84}>Output Window</DockTab>
          <DockTab $w={90}>Background tasks</DockTab>
        </Docked>
      </Shell>
    </Screen>
  );
}
